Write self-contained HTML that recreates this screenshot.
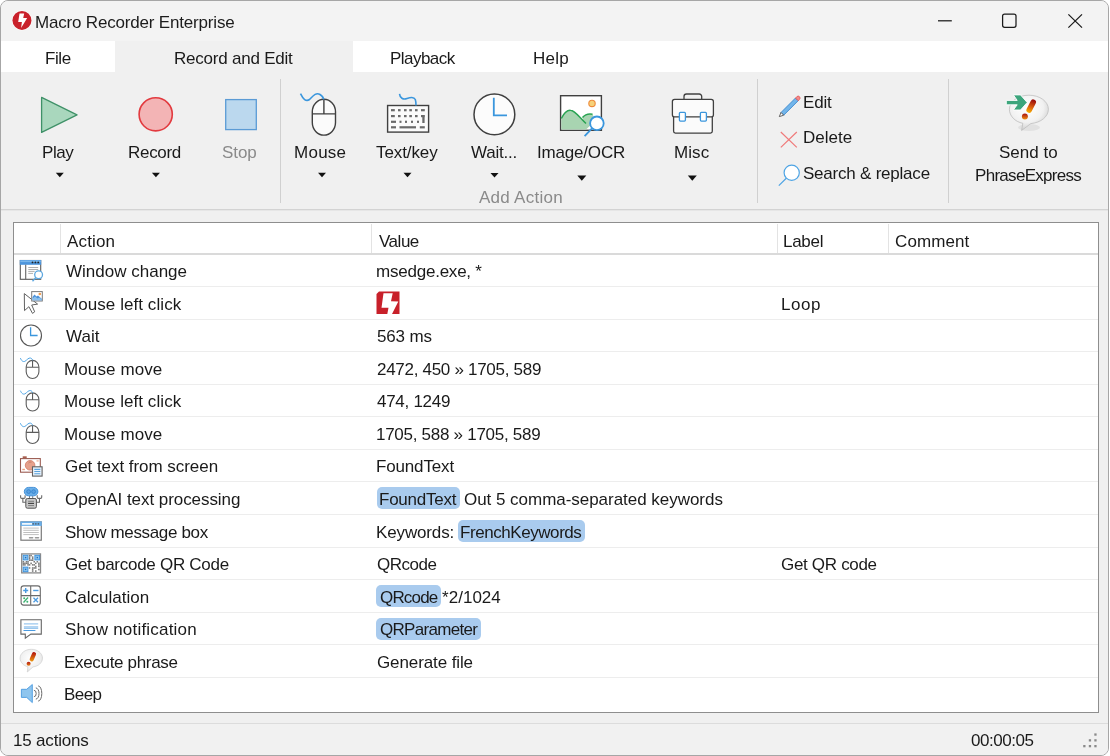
<!DOCTYPE html>
<html><head><meta charset="utf-8">
<style>
html,body{margin:0;padding:0;width:1110px;height:756px;overflow:hidden;background:#ffffff;}
body{position:relative;font-family:"Liberation Sans",sans-serif;}
.win{position:absolute;left:0;top:0;width:1107px;height:754px;border:1px solid #a6a6a6;border-radius:8px;overflow:hidden;background:#f0f0f0;}
.abs{position:absolute;}
.t{position:absolute;white-space:nowrap;line-height:20px;will-change:transform}
.hl{position:absolute;left:14px;width:1084px;height:1px;background:#ededed;}
.tok{position:absolute;height:22px;border-radius:5px;background:#a9cbee;}
svg{position:absolute;left:0;top:0;overflow:visible}
</style></head><body>
<div class="win"></div>
<div class="abs" style="left:1px;top:1px;width:1107px;height:40px;background:#f3f3f3;border-radius:7px 7px 0 0"></div>
<div class="abs" style="left:1px;top:41px;width:114px;height:31px;background:#ffffff"></div>
<div class="abs" style="left:353px;top:41px;width:755px;height:31px;background:#ffffff"></div>
<div class="abs" style="left:1px;top:209px;width:1107px;height:1px;background:#d3d3d3"></div><div class="abs" style="left:1px;top:210px;width:1107px;height:1px;background:#e6e6e6"></div>
<div class="abs" style="left:280px;top:79px;width:1px;height:124px;background:#d0d0d0"></div>
<div class="abs" style="left:757px;top:79px;width:1px;height:124px;background:#d0d0d0"></div>
<div class="abs" style="left:948px;top:79px;width:1px;height:124px;background:#d0d0d0"></div>
<!-- table -->
<div class="abs" style="left:13px;top:222px;width:1084px;height:489px;border:1px solid #8e8e8e;background:#ffffff"></div>
<div class="abs" style="left:14px;top:253px;width:1084px;height:2px;background:#dadada"></div>
<div class="abs" style="left:60px;top:224px;width:1px;height:29px;background:#e3e3e3"></div>
<div class="abs" style="left:371px;top:224px;width:1px;height:29px;background:#e3e3e3"></div>
<div class="abs" style="left:777px;top:224px;width:1px;height:29px;background:#e3e3e3"></div>
<div class="abs" style="left:888px;top:224px;width:1px;height:29px;background:#e3e3e3"></div>
<div class="hl" style="top:286.15px"></div>
<div class="hl" style="top:318.70px"></div>
<div class="hl" style="top:351.25px"></div>
<div class="hl" style="top:383.80px"></div>
<div class="hl" style="top:416.35px"></div>
<div class="hl" style="top:448.90px"></div>
<div class="hl" style="top:481.45px"></div>
<div class="hl" style="top:514.00px"></div>
<div class="hl" style="top:546.55px"></div>
<div class="hl" style="top:579.10px"></div>
<div class="hl" style="top:611.65px"></div>
<div class="hl" style="top:644.20px"></div>
<div class="hl" style="top:676.75px"></div>
<div class="tok" style="left:376.8px;top:487.3px;width:82.8px"></div>
<div class="tok" style="left:457.5px;top:519.9px;width:127.6px"></div>
<div class="tok" style="left:376.3px;top:585.0px;width:65.0px"></div>
<div class="tok" style="left:376.3px;top:617.5px;width:104.8px"></div>
<!-- status -->
<div class="abs" style="left:1px;top:723px;width:1107px;height:1px;background:#dcdcdc"></div><div class="abs" style="left:1px;top:724px;width:1107px;height:31px;background:#f1f1f1;border-radius:0 0 7px 7px"></div>
<div class="t" style="left:35.14px;top:13.00px;font-size:17px;letter-spacing:-0.183px;color:#1c1c1c">Macro Recorder Enterprise</div>
<div class="t" style="left:44.64px;top:49.00px;font-size:17px;letter-spacing:-0.406px;color:#1a1a1a">File</div>
<div class="t" style="left:173.94px;top:49.00px;font-size:17px;letter-spacing:-0.220px;color:#1a1a1a">Record and Edit</div>
<div class="t" style="left:390.34px;top:49.00px;font-size:17px;letter-spacing:-0.541px;color:#1a1a1a">Playback</div>
<div class="t" style="left:533.24px;top:49.00px;font-size:17px;letter-spacing:0.237px;color:#1a1a1a">Help</div>
<div class="t" style="left:41.64px;top:143.00px;font-size:17px;letter-spacing:-0.437px;color:#1a1a1a">Play</div>
<div class="t" style="left:127.54px;top:143.00px;font-size:17px;letter-spacing:-0.297px;color:#1a1a1a">Record</div>
<div class="t" style="left:221.92px;top:143.00px;font-size:17px;letter-spacing:-0.059px;color:#8a8a8a">Stop</div>
<div class="t" style="left:293.94px;top:143.00px;font-size:17px;letter-spacing:0.262px;color:#1a1a1a">Mouse</div>
<div class="t" style="left:376.26px;top:143.00px;font-size:17px;letter-spacing:-0.088px;color:#1a1a1a">Text/key</div>
<div class="t" style="left:471.40px;top:143.00px;font-size:17px;letter-spacing:-0.208px;color:#1a1a1a">Wait...</div>
<div class="t" style="left:537.17px;top:143.00px;font-size:17px;letter-spacing:-0.188px;color:#1a1a1a">Image/OCR</div>
<div class="t" style="left:674.44px;top:143.00px;font-size:17px;letter-spacing:0.087px;color:#1a1a1a">Misc</div>
<div class="t" style="left:478.70px;top:188.00px;font-size:17px;letter-spacing:0.259px;color:#8a8a8a">Add Action</div>
<div class="t" style="left:802.74px;top:93.00px;font-size:17px;letter-spacing:-0.190px;color:#1a1a1a">Edit</div>
<div class="t" style="left:802.74px;top:128.00px;font-size:17px;letter-spacing:0.027px;color:#1a1a1a">Delete</div>
<div class="t" style="left:803.42px;top:164.00px;font-size:17px;letter-spacing:-0.221px;color:#1a1a1a">Search &amp; replace</div>
<div class="t" style="left:999.22px;top:143.00px;font-size:17px;letter-spacing:-0.001px;color:#1a1a1a">Send to</div>
<div class="t" style="left:974.94px;top:166.00px;font-size:17px;letter-spacing:-0.700px;color:#1a1a1a">PhraseExpress</div>
<div class="t" style="left:67.30px;top:232.00px;font-size:17px;letter-spacing:0.161px;color:#1a1a1a">Action</div>
<div class="t" style="left:378.50px;top:232.00px;font-size:17px;letter-spacing:-0.476px;color:#1a1a1a">Value</div>
<div class="t" style="left:782.84px;top:232.00px;font-size:17px;letter-spacing:-0.270px;color:#1a1a1a">Label</div>
<div class="t" style="left:894.65px;top:232.00px;font-size:17px;letter-spacing:0.105px;color:#1a1a1a">Comment</div>
<div class="t" style="left:65.70px;top:262.00px;font-size:17px;letter-spacing:0.005px;color:#1a1a1a">Window change</div>
<div class="t" style="left:64.34px;top:295.00px;font-size:17px;letter-spacing:0.066px;color:#1a1a1a">Mouse left click</div>
<div class="t" style="left:65.70px;top:327.00px;font-size:17px;letter-spacing:0.031px;color:#1a1a1a">Wait</div>
<div class="t" style="left:64.34px;top:360.00px;font-size:17px;letter-spacing:0.106px;color:#1a1a1a">Mouse move</div>
<div class="t" style="left:64.34px;top:392.00px;font-size:17px;letter-spacing:0.066px;color:#1a1a1a">Mouse left click</div>
<div class="t" style="left:64.34px;top:425.00px;font-size:17px;letter-spacing:0.106px;color:#1a1a1a">Mouse move</div>
<div class="t" style="left:64.85px;top:457.00px;font-size:17px;letter-spacing:-0.047px;color:#1a1a1a">Get text from screen</div>
<div class="t" style="left:65.02px;top:490.00px;font-size:17px;letter-spacing:-0.061px;color:#1a1a1a">OpenAI text processing</div>
<div class="t" style="left:65.02px;top:523.00px;font-size:17px;letter-spacing:-0.347px;color:#1a1a1a">Show message box</div>
<div class="t" style="left:64.85px;top:555.00px;font-size:17px;letter-spacing:-0.277px;color:#1a1a1a">Get barcode QR Code</div>
<div class="t" style="left:64.85px;top:588.00px;font-size:17px;letter-spacing:0.010px;color:#1a1a1a">Calculation</div>
<div class="t" style="left:65.02px;top:620.00px;font-size:17px;letter-spacing:0.195px;color:#1a1a1a">Show notification</div>
<div class="t" style="left:64.34px;top:653.00px;font-size:17px;letter-spacing:-0.320px;color:#1a1a1a">Execute phrase</div>
<div class="t" style="left:64.34px;top:685.00px;font-size:17px;letter-spacing:-0.576px;color:#1a1a1a">Beep</div>
<div class="t" style="left:376.48px;top:262.00px;font-size:17px;letter-spacing:-0.225px;color:#1a1a1a">msedge.exe, *</div>
<div class="t" style="left:376.82px;top:327.00px;font-size:17px;letter-spacing:-0.152px;color:#1a1a1a">563 ms</div>
<div class="t" style="left:376.65px;top:360.00px;font-size:17px;letter-spacing:-0.291px;color:#1a1a1a">2472, 450 » 1705, 589</div>
<div class="t" style="left:377.16px;top:392.00px;font-size:17px;letter-spacing:-0.275px;color:#1a1a1a">474, 1249</div>
<div class="t" style="left:376.31px;top:425.00px;font-size:17px;letter-spacing:-0.274px;color:#1a1a1a">1705, 588 » 1705, 589</div>
<div class="t" style="left:376.14px;top:457.00px;font-size:17px;letter-spacing:-0.157px;color:#1a1a1a">FoundText</div>
<div class="t" style="left:379.24px;top:490.00px;font-size:17px;letter-spacing:-0.245px;color:#1a1a1a">FoundText</div>
<div class="t" style="left:464.12px;top:490.00px;font-size:17px;letter-spacing:-0.032px;color:#1a1a1a">Out 5 comma-separated keywords</div>
<div class="t" style="left:376.14px;top:523.00px;font-size:17px;letter-spacing:-0.139px;color:#1a1a1a">Keywords:</div>
<div class="t" style="left:460.14px;top:523.00px;font-size:17px;letter-spacing:-0.437px;color:#1a1a1a">FrenchKeywords</div>
<div class="t" style="left:376.82px;top:555.00px;font-size:17px;letter-spacing:-0.474px;color:#1a1a1a">QRcode</div>
<div class="t" style="left:379.92px;top:588.00px;font-size:17px;letter-spacing:-0.814px;color:#1a1a1a">QRcode</div>
<div class="t" style="left:442.33px;top:588.00px;font-size:17px;letter-spacing:0.034px;color:#1a1a1a">*2/1024</div>
<div class="t" style="left:379.92px;top:620.00px;font-size:17px;letter-spacing:-0.696px;color:#1a1a1a">QRParameter</div>
<div class="t" style="left:376.65px;top:653.00px;font-size:17px;letter-spacing:-0.106px;color:#1a1a1a">Generate file</div>
<div class="t" style="left:780.84px;top:295.00px;font-size:17px;letter-spacing:0.552px;color:#1a1a1a">Loop</div>
<div class="t" style="left:781.25px;top:555.00px;font-size:17px;letter-spacing:-0.315px;color:#1a1a1a">Get QR code</div>
<div class="t" style="left:12.81px;top:731.00px;font-size:17px;letter-spacing:-0.188px;color:#1a1a1a">15 actions</div>
<div class="t" style="left:971.39px;top:731.00px;font-size:17px;letter-spacing:-0.464px;color:#1a1a1a">00:00:05</div>
<svg width="1110" height="756" viewBox="0 0 1110 756">
<!-- app icon -->
<circle cx="21.95" cy="20.4" r="10.2" fill="#ffffff" opacity="0.7"/>
<circle cx="21.95" cy="20.4" r="9.5" fill="#c9212b"/>
<path d="M19.5 13.6 H24.2 L23.2 17.9 H27.2 L21.1 28 L21.9 22 H18.2 Z" fill="#ffffff"/>
<!-- play -->
<path d="M41.6 97.4 L77 114.9 L41.6 132.4 Z" fill="#a9d7bd" stroke="#3f9168" stroke-width="1.3" stroke-linejoin="round"/>
<circle cx="155.7" cy="114.3" r="16.6" fill="#f3b4b5" stroke="#e23a3f" stroke-width="1.6"/>
<rect x="225.7" y="99.6" width="30.6" height="30" fill="#bbd8ee" stroke="#5b9bd5" stroke-width="1.3"/>
<!-- dropdown arrows -->
<path d="M55.8 172.8 h8 l-4 4.5 z" fill="#111"/>
<path d="M151.9 172.8 h8 l-4 4.5 z" fill="#111"/>
<path d="M318 172.8 h8 l-4 4.5 z" fill="#111"/>
<path d="M403.5 172.8 h8 l-4 4.5 z" fill="#111"/>
<path d="M490.5 173 h8 l-4 4.5 z" fill="#111"/>
<path d="M577.3 175.5 h9 l-4.5 5.2 z" fill="#111"/>
<path d="M687.8 175.5 h9 l-4.5 5.2 z" fill="#111"/>
<!-- mouse -->
<g fill="none" stroke="#404040" stroke-width="1.4">
<rect x="312.3" y="99.3" width="23.2" height="35.8" rx="11.6" ry="12.5" fill="#fbfbfb"/>
<path d="M312.3 113.9 H335.5 M323.9 99.3 V113.9"/>
</g>
<path d="M300.5 93.7 C303 99 306 102 309.5 99.5 C313 96 316 92 320 94.5 C322.5 96 323.5 98 323.7 99.5" fill="none" stroke="#3a96dd" stroke-width="1.6"/>
<!-- keyboard -->
<rect x="387.6" y="105.5" width="41" height="26.6" fill="#fbfbfb" stroke="#404040" stroke-width="1.4"/>
<g fill="#6a6a6a">
<rect x="391" y="109.1" width="3.8" height="2.2"/><rect x="398" y="109.1" width="2.6" height="2.2"/><rect x="404" y="109.1" width="2.6" height="2.2"/><rect x="409.3" y="109.1" width="2.6" height="2.2"/><rect x="415" y="109.1" width="2.6" height="2.2"/><rect x="421" y="109.1" width="3.8" height="2.2"/>
<rect x="391" y="115" width="3.8" height="2.2"/><rect x="398" y="115" width="2.6" height="2.2"/><rect x="404" y="115" width="2.6" height="2.2"/><rect x="409.3" y="115" width="2.6" height="2.2"/><rect x="415" y="115" width="2.6" height="2.2"/><rect x="421" y="115" width="3.6" height="2.2"/><rect x="422.3" y="115" width="2.3" height="8"/>
<rect x="391" y="120.7" width="5" height="2.2"/><rect x="399.5" y="120.7" width="2" height="2.2"/><rect x="405" y="120.7" width="2" height="2.2"/><rect x="411" y="120.7" width="2" height="2.2"/><rect x="417" y="120.7" width="2" height="2.2"/>
<rect x="391" y="126.2" width="5" height="2.2"/><rect x="399.5" y="126.2" width="16.5" height="2.2"/><rect x="419.8" y="126.2" width="5" height="2.2"/>
</g>
<path d="M399.5 93.8 C400 98 403 100 407 98.5 C411 97 414 96.5 415.3 99.5 C416 101.5 416 103.5 416 105.5" fill="none" stroke="#3a96dd" stroke-width="1.6"/>
<!-- clock -->
<circle cx="494.4" cy="114.4" r="20.4" fill="#fcfcfc" stroke="#404040" stroke-width="1.5"/>
<path d="M493.8 97.8 V115.4 H507" fill="none" stroke="#3a96dd" stroke-width="1.8"/>
<!-- image/ocr -->
<rect x="560.6" y="95.7" width="40.8" height="34.6" fill="#ffffff" stroke="#404040" stroke-width="1.4"/>
<path d="M561.3 118.5 C564 113 567 110 570.5 110.3 C575 110.5 580 118 586 123.5 L586 129.6 L561.3 129.6 Z" fill="#a8d4b1"/>
<path d="M582.5 117.5 C585 114.5 589 113.5 593 114.5 L594 122 L586 129.6 Z" fill="#a8d4b1"/>
<path d="M561.3 118.5 C564 113 567 110 570.5 110.3 C575 110.5 580 118 586 123.5 M582.5 117.5 C585 114.5 589 113.5 592.5 114.2" fill="none" stroke="#29a352" stroke-width="1.5"/>
<circle cx="592" cy="103.4" r="3.2" fill="#f6d27a" stroke="#ee8a3a" stroke-width="1.1"/>
<circle cx="596.9" cy="123.3" r="6.8" fill="#ffffff" stroke="#3a96dd" stroke-width="1.8"/>
<path d="M592 128.4 L584.6 136.2" stroke="#3a96dd" stroke-width="1.8"/>
<!-- misc briefcase -->
<g fill="#fbfbfb" stroke="#404040" stroke-width="1.3">
<path d="M684 99.3 V96.5 a2.5 2.5 0 0 1 2.5 -2.5 H699.2 a2.5 2.5 0 0 1 2.5 2.5 V99.3" fill="none"/>
<path d="M673.6 116.9 V131.3 a1.8 1.8 0 0 0 1.8 1.8 H710.5 a1.8 1.8 0 0 0 1.8 -1.8 V116.9"/>
<rect x="672.4" y="99.4" width="41" height="17.5" rx="2.2"/>
</g>
<g fill="#ffffff" stroke="#3a96dd" stroke-width="1.3">
<rect x="679.4" y="112.3" width="6" height="8.8" rx="1"/>
<rect x="700.4" y="112.3" width="6" height="8.8" rx="1"/>
</g>
<!-- edit pencil -->
<path d="M781 112.5 L795.5 98 L798.2 100.7 L783.7 115.2 Z" fill="#72b5ea" stroke="#3a86cc" stroke-width="0.9"/>
<path d="M795.5 98 L796.8 96.7 a1.9 1.9 0 0 1 2.7 2.7 L798.2 100.7 Z" fill="#f48a8a" stroke="#e05050" stroke-width="0.8"/>
<path d="M781 112.5 L779.3 116.6 L783.7 115.2 Z" fill="#ffffff" stroke="#555" stroke-width="0.9"/>
<!-- delete X -->
<path d="M780.8 132 L796.8 147.4 M796.8 132 L780.8 147.4" stroke="#f07a7a" stroke-width="1.2"/>
<!-- search magnifier -->
<circle cx="791.7" cy="172.8" r="7.6" fill="#ffffff" stroke="#4ea4e4" stroke-width="1.2"/>
<path d="M786.3 178.2 L778.8 185.6" stroke="#4ea4e4" stroke-width="1.2"/>
<!-- phraseexpress bubble -->
<defs>
<radialGradient id="bub" cx="0.45" cy="0.35" r="0.7">
<stop offset="0" stop-color="#ffffff"/><stop offset="0.6" stop-color="#f1f1f1"/><stop offset="1" stop-color="#c8c8c8"/>
</radialGradient>
<linearGradient id="exc" gradientUnits="userSpaceOnUse" x1="1033" y1="100" x2="1029" y2="112">
<stop offset="0" stop-color="#9a0c0c"/><stop offset="0.55" stop-color="#d85a10"/><stop offset="1" stop-color="#f4a800"/>
</linearGradient>
<linearGradient id="dot" gradientUnits="userSpaceOnUse" x1="0" y1="113.5" x2="0" y2="119.5">
<stop offset="0" stop-color="#a81010"/><stop offset="1" stop-color="#f09010"/>
</linearGradient>
</defs>
<ellipse cx="1029" cy="127.5" rx="11" ry="3.5" fill="#000" opacity="0.06"/>
<path d="M1028.9 95.2 C1039.8 95.2 1048.4 101.5 1048.4 109.2 C1048.4 116.6 1041 122.6 1030.8 123.6 L1021.6 130.5 L1022.8 123.3 C1015 121.8 1009.4 116 1009.4 109.2 C1009.4 101.5 1018 95.2 1028.9 95.2 Z" fill="url(#bub)" stroke="#b8b8b8" stroke-width="0.7"/>
<path d="M1033.2 102.2 L1029.2 110" stroke="url(#exc)" stroke-width="5.6" stroke-linecap="round"/>
<circle cx="1024.9" cy="116.5" r="3" fill="url(#dot)"/>
<path d="M1006.3 100.4 H1017.2 L1013.4 94.9 H1020.5 L1027.2 102.5 L1020.5 110 H1013.4 L1017.2 104.8 H1006.3 Z" fill="#3ca57c" stroke="#ffffff" stroke-width="0.9" stroke-linejoin="round"/>
<!-- window buttons -->
<path d="M938 20.8 H951.8" stroke="#1a1a1a" stroke-width="1.25"/>
<rect x="1002.6" y="14.1" width="13.4" height="13.2" rx="2" fill="none" stroke="#1a1a1a" stroke-width="1.25"/>
<path d="M1068.4 14.4 L1082 27.6 M1082 14.4 L1068.4 27.6" stroke="#1a1a1a" stroke-width="1.25"/>
<!-- grip -->
<g fill="#8a8a8a">
<rect x="1094.3" y="733.4" width="2.3" height="2.3"/>
<rect x="1088.8" y="739.2" width="2.3" height="2.3"/><rect x="1094.3" y="739.2" width="2.3" height="2.3"/>
<rect x="1083.2" y="745" width="2.3" height="2.3"/><rect x="1088.8" y="745" width="2.3" height="2.3"/><rect x="1094.3" y="745" width="2.3" height="2.3"/>
</g>
</svg>
<svg width="1110" height="756" viewBox="0 0 1110 756">
<!-- row0 window change -->
<rect x="20.3" y="260.5" width="20.4" height="18.8" fill="#ffffff" stroke="#5a5a5a" stroke-width="1.1"/>
<rect x="19.8" y="260" width="21.4" height="4.8" fill="#4d95dc"/>
<rect x="20.3" y="260.5" width="20.4" height="1.6" fill="#7ab6ea"/>
<circle cx="32.5" cy="262.4" r="0.9" fill="#222"/><circle cx="35.4" cy="262.4" r="0.9" fill="#222"/><circle cx="38.2" cy="262.4" r="0.9" fill="#222"/>
<path d="M25.7 264.8 V279.3" stroke="#666" stroke-width="1.1"/>
<path d="M28.3 267.5 H38.2 M28.3 269.5 H38.2 M28.3 271.4 H34.7 M28.3 273.4 H33" stroke="#9a9a9a" stroke-width="0.8"/>
<circle cx="38.6" cy="274.7" r="3.9" fill="#ffffff" stroke="#5ba7e0" stroke-width="1.3"/>
<path d="M35.9 277.5 L32.5 281.3" stroke="#5ba7e0" stroke-width="1.3"/>
<!-- row1 cursor + image -->
<path d="M24.3 293.6 L24.5 310.6 L28.9 306.7 L32.5 313.4 L34.7 311.8 L31.7 305 L37.6 304.1 Z" fill="#ffffff" stroke="#606060" stroke-width="1" stroke-linejoin="round"/>
<rect x="31.7" y="291.6" width="10.6" height="9.4" fill="#ffffff" stroke="#7a7a7a" stroke-width="1"/>
<path d="M32.5 297 L34.5 294.5 L36.5 296.5 L38 295.5 L42 299 L42 300.2 L32.5 300.2 Z" fill="#4a90d9"/>
<path d="M32.5 298.5 L35 296.5 L37.5 298.5 L39.5 297.5 L42 299.8 L42 300.2 L32.5 300.2 Z" fill="#8cc0ec"/>
<circle cx="39.8" cy="294" r="1.3" fill="#f39a4a"/>
<!-- row2 clock -->
<circle cx="31" cy="335.45" r="10.5" fill="#ffffff" stroke="#555" stroke-width="1.1"/>
<path d="M30.6 327.3 V335.5 H37.6" fill="none" stroke="#3a96dd" stroke-width="1.3"/>
<g transform="translate(0 351.75)">
<rect x="26.2" y="8.6" width="12.7" height="18.1" rx="6.35" ry="6.6" fill="#ffffff" stroke="#5c5c5c" stroke-width="1.1"/>
<path d="M26.2 15.5 H38.9 M32.55 8.6 V15.5" stroke="#5c5c5c" stroke-width="1.1"/>
<path d="M20.4 6.4 C21.5 9 23 10.5 25 9.5 C27 8.3 28.5 5.8 30.5 6.3 C32 6.7 32.5 7.8 32.55 8.6" fill="none" stroke="#4ea4e4" stroke-width="1"/>
</g>
<g transform="translate(0 384.30)">
<rect x="26.2" y="8.6" width="12.7" height="18.1" rx="6.35" ry="6.6" fill="#ffffff" stroke="#5c5c5c" stroke-width="1.1"/>
<path d="M26.2 15.5 H38.9 M32.55 8.6 V15.5" stroke="#5c5c5c" stroke-width="1.1"/>
<path d="M20.4 6.4 C21.5 9 23 10.5 25 9.5 C27 8.3 28.5 5.8 30.5 6.3 C32 6.7 32.5 7.8 32.55 8.6" fill="none" stroke="#4ea4e4" stroke-width="1"/>
</g>
<g transform="translate(0 416.85)">
<rect x="26.2" y="8.6" width="12.7" height="18.1" rx="6.35" ry="6.6" fill="#ffffff" stroke="#5c5c5c" stroke-width="1.1"/>
<path d="M26.2 15.5 H38.9 M32.55 8.6 V15.5" stroke="#5c5c5c" stroke-width="1.1"/>
<path d="M20.4 6.4 C21.5 9 23 10.5 25 9.5 C27 8.3 28.5 5.8 30.5 6.3 C32 6.7 32.5 7.8 32.55 8.6" fill="none" stroke="#4ea4e4" stroke-width="1"/>
</g>
<!-- row6 camera -->
<rect x="22.7" y="456.3" width="4" height="2" fill="#a86050"/>
<rect x="20.5" y="458.6" width="19.8" height="13.6" fill="#ffffff" stroke="#9a5a50" stroke-width="1.1"/>
<circle cx="30.1" cy="465.3" r="4.8" fill="#e5a18c" stroke="#d07a65" stroke-width="0.8"/>
<path d="M28.5 463 a2.5 2.5 0 0 1 3 -0.8" fill="none" stroke="#c06a55" stroke-width="0.7"/>
<rect x="36.5" y="460.2" width="2.2" height="1.4" fill="#f0b8a0"/>
<rect x="22.3" y="468.8" width="2.6" height="1.4" fill="#e8a080"/>
<rect x="32.5" y="466.8" width="9.6" height="9.3" fill="#eaf3fb" stroke="#606060" stroke-width="1.1"/>
<path d="M34.3 469.4 H40.3 M34.3 471.5 H40.3 M34.3 473.8 H40.3" stroke="#5ba3dd" stroke-width="1.1"/>
<!-- row7 robot -->
<path d="M20.6 495.2 V497.3 Q20.6 498.4 21.7 498.4 H24 Q25.1 498.4 25.1 497.3 V495.2" fill="none" stroke="#6a6a6a" stroke-width="1.1"/>
<path d="M22.85 498.4 V502.3 H25.8" fill="none" stroke="#6a6a6a" stroke-width="1.1"/>
<path d="M37.2 495.2 V497.3 Q37.2 498.4 38.3 498.4 H40.6 Q41.7 498.4 41.7 497.3 V495.2" fill="none" stroke="#6a6a6a" stroke-width="1.1"/>
<path d="M39.45 498.4 V502.3 H36.4" fill="none" stroke="#6a6a6a" stroke-width="1.1"/>
<path d="M29.5 496 V498.5 M32.7 496 V498.5" stroke="#808080" stroke-width="1"/>
<rect x="25.8" y="498.5" width="10.6" height="9.7" rx="1.5" fill="#c9c9c9" stroke="#555" stroke-width="1"/>
<path d="M28.1 501.3 H34 M28.1 503.4 H34 M28.1 505.6 H34" stroke="#777" stroke-width="0.9"/>
<path d="M28.1 503.4 H34" stroke="#333" stroke-width="0.9"/>
<rect x="24.3" y="487.4" width="13.6" height="8.4" rx="4.2" fill="#6aaee8" stroke="#3a8ad5" stroke-width="0.9"/>
<circle cx="28.6" cy="491.6" r="1.9" fill="#5aa0e0" stroke="#2e7cc8" stroke-width="0.7"/>
<circle cx="33.6" cy="491.6" r="1.9" fill="#5aa0e0" stroke="#2e7cc8" stroke-width="0.7"/>
<!-- row8 message box -->
<rect x="20.9" y="521.9" width="20.4" height="18.3" fill="#ffffff" stroke="#7a7a7a" stroke-width="1.2"/>
<rect x="20.4" y="521.4" width="21.4" height="4.5" fill="#6aaee8"/>
<rect x="22" y="523.1" width="10" height="1.6" fill="#ffffff"/>
<path d="M32.5 523.9 H40" stroke="#555" stroke-width="1.2" stroke-dasharray="1.4 1.2"/>
<path d="M23.3 528.1 H38.8 M23.3 530.3 H38.8 M23.3 532.5 H38.8 M23.3 534.6 H38.8" stroke="#b8b8b8" stroke-width="0.9"/>
<path d="M29.6 537.7 H32.6 M35.5 537.7 H38.5" stroke="#999" stroke-width="1.6" stroke-linecap="round"/>
<!-- row9 QR -->
<rect x="21.7" y="553.9" width="18.8" height="19" fill="#ffffff" stroke="#8a8a8a" stroke-width="1.3"/>
<g fill="#7c7c7c"><rect x="28.80" y="554.80" width="1.55" height="1.55"/><rect x="30.35" y="554.80" width="1.55" height="1.55"/><rect x="28.80" y="556.35" width="1.55" height="1.55"/><rect x="31.90" y="556.35" width="1.55" height="1.55"/><rect x="28.80" y="557.90" width="1.55" height="1.55"/><rect x="31.90" y="557.90" width="1.55" height="1.55"/><rect x="28.80" y="559.45" width="1.55" height="1.55"/><rect x="30.35" y="559.45" width="1.55" height="1.55"/><rect x="31.90" y="559.45" width="1.55" height="1.55"/><rect x="22.60" y="561.00" width="1.55" height="1.55"/><rect x="25.70" y="561.00" width="1.55" height="1.55"/><rect x="27.25" y="561.00" width="1.55" height="1.55"/><rect x="33.45" y="561.00" width="1.55" height="1.55"/><rect x="36.55" y="561.00" width="1.55" height="1.55"/><rect x="22.60" y="562.55" width="1.55" height="1.55"/><rect x="24.15" y="562.55" width="1.55" height="1.55"/><rect x="25.70" y="562.55" width="1.55" height="1.55"/><rect x="27.25" y="562.55" width="1.55" height="1.55"/><rect x="30.35" y="562.55" width="1.55" height="1.55"/><rect x="35.00" y="562.55" width="1.55" height="1.55"/><rect x="38.10" y="562.55" width="1.55" height="1.55"/><rect x="22.60" y="564.10" width="1.55" height="1.55"/><rect x="24.15" y="564.10" width="1.55" height="1.55"/><rect x="27.25" y="564.10" width="1.55" height="1.55"/><rect x="28.80" y="564.10" width="1.55" height="1.55"/><rect x="31.90" y="564.10" width="1.55" height="1.55"/><rect x="33.45" y="564.10" width="1.55" height="1.55"/><rect x="38.10" y="564.10" width="1.55" height="1.55"/><rect x="35.00" y="565.65" width="1.55" height="1.55"/><rect x="38.10" y="565.65" width="1.55" height="1.55"/><rect x="28.80" y="567.20" width="1.55" height="1.55"/><rect x="31.90" y="567.20" width="1.55" height="1.55"/><rect x="33.45" y="567.20" width="1.55" height="1.55"/><rect x="35.00" y="567.20" width="1.55" height="1.55"/><rect x="31.90" y="568.75" width="1.55" height="1.55"/><rect x="38.10" y="568.75" width="1.55" height="1.55"/><rect x="31.90" y="570.30" width="1.55" height="1.55"/><rect x="35.00" y="570.30" width="1.55" height="1.55"/></g>
<g fill="#8cc4ef" stroke="#3d93de" stroke-width="1">
<rect x="23.2" y="555.3" width="4.7" height="4.6"/>
<rect x="34.9" y="555.3" width="4.7" height="4.6"/>
<rect x="23.2" y="567.1" width="4.7" height="4.6"/>
</g>
<g fill="#1f6fc0">
<rect x="24.9" y="556.9" width="1.4" height="1.4"/><rect x="36.6" y="556.9" width="1.4" height="1.4"/><rect x="24.9" y="568.7" width="1.4" height="1.4"/>
</g>
<!-- row10 calc -->
<rect x="21.1" y="585.9" width="19.2" height="19.2" rx="2.6" fill="#ffffff" stroke="#6a6a6a" stroke-width="1.1"/>
<path d="M30.7 585.9 V605.1 M21.1 595.6 H40.3" stroke="#6a6a6a" stroke-width="1.1"/>
<path d="M23.2 590.5 H28.2 M25.7 588 V593" stroke="#4a9ae0" stroke-width="1.4"/>
<path d="M33.2 590.5 H38.5" stroke="#4a9ae0" stroke-width="1.4"/>
<path d="M23.5 602.5 L28 597.5" stroke="#3cb371" stroke-width="1.3"/>
<circle cx="24.2" cy="598.2" r="1" fill="#3cb371"/><circle cx="27.3" cy="601.8" r="1" fill="#3cb371"/>
<path d="M33.5 597.8 L38 602.3 M38 597.8 L33.5 602.3" stroke="#4a9ae0" stroke-width="1.3"/>
<!-- row11 notification -->
<path d="M20.9 619.8 H41.3 V634.1 H30.9 L25.3 638.2 L25.3 634.1 H20.9 Z" fill="#ffffff" stroke="#666" stroke-width="1.1" stroke-linejoin="miter"/>
<path d="M23.9 623.8 H38.2 M23.9 626.9 H38.2 M23.9 628.4 H38.2" stroke="#9cc8ee" stroke-width="1.3"/>
<path d="M23.9 630.5 H35" stroke="#4a9ae0" stroke-width="1.1" stroke-linecap="round"/>
<!-- row12 execute phrase -->
<defs>
<radialGradient id="bub2" cx="0.45" cy="0.4" r="0.65">
<stop offset="0" stop-color="#ffffff"/><stop offset="0.7" stop-color="#efefef"/><stop offset="1" stop-color="#d8d8d8"/>
</radialGradient>
<linearGradient id="exc2" gradientUnits="userSpaceOnUse" x1="0" y1="652" x2="0" y2="662">
<stop offset="0" stop-color="#b01010"/><stop offset="1" stop-color="#f0a010"/>
</linearGradient>
<linearGradient id="dot2" x1="0" y1="0" x2="0" y2="1">
<stop offset="0" stop-color="#b01818"/><stop offset="1" stop-color="#e88010"/>
</linearGradient>
</defs>
<path d="M31.3 649.3 C37.5 649.3 42.5 653.3 42.5 658.1 C42.5 662.6 38.5 666.3 33 666.9 L27.3 672 L27.9 666.8 C23.5 665.8 20.1 662.3 20.1 658.1 C20.1 653.3 25.1 649.3 31.3 649.3 Z" fill="url(#bub2)" stroke="#cfcfcf" stroke-width="0.7"/>
<path d="M34 654.2 L31.7 659.3" stroke="url(#exc2)" stroke-width="4.1" stroke-linecap="round"/>
<circle cx="28.6" cy="663.8" r="2" fill="url(#dot2)"/>
<!-- row13 beep -->
<path d="M21.4 689.3 H26.7 L32.3 684.5 V702.6 L26.7 697.4 H21.4 Z" fill="#8ec5ee" stroke="#4a9ae0" stroke-width="0.9" stroke-linejoin="round"/>
<path d="M33.9 690.3 a2.3 3.2 0 0 1 0 6.4 M35.8 687.9 a3.2 5.6 0 0 1 0 11.2 M38.2 685.9 a3.6 7.6 0 0 1 0 15.2" fill="none" stroke="#6a6a6a" stroke-width="1"/>
<!-- value logo row1 -->
<path d="M379 291.4 H399.5 V313.9 H376.5 V293.9 Z" fill="#c8202a"/>
<path d="M383.5 293.2 H392.7 L391 301.2 L398.3 301.5 L392 313.9 L387.3 313.9 L388.5 307.8 L381.5 307.8 Z" fill="#ffffff"/>
</svg>

</body></html>
